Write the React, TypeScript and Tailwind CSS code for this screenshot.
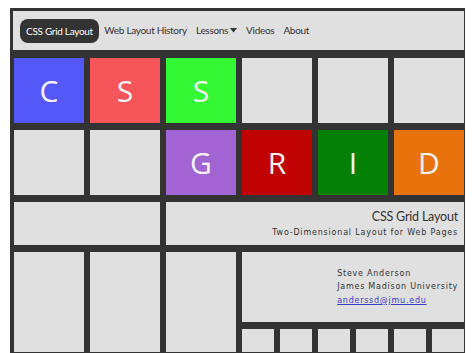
const tiles = [
  { letter: "C", bg: "bg-[#5458f8]" },
  { letter: "S", bg: "bg-[#f6565a]" },
  { letter: "S", bg: "bg-[#35f834]" },
  { letter: "", bg: "bg-[#e0e0e0]" },
  { letter: "", bg: "bg-[#e0e0e0]" },
  { letter: "", bg: "bg-[#e0e0e0]" },
  { letter: "", bg: "bg-[#e0e0e0]" },
  { letter: "", bg: "bg-[#e0e0e0]" },
  { letter: "G", bg: "bg-[#a263d3]" },
  { letter: "R", bg: "bg-[#c00202]" },
  { letter: "I", bg: "bg-[#048004]" },
  { letter: "D", bg: "bg-[#e8730c]" },
];

const navItems = ["Web Layout History", "Lessons", "Videos", "About"];

export default function App() {
  return (
    <div className="min-h-[353px] bg-white pl-[10px] pt-[8px] font-['Open_Sans',sans-serif]">
      <div className="w-[455px] bg-[#333333] pt-[3px] pl-[3px] pr-[1px] pb-4">
        <nav className="flex h-[39px] items-center bg-[#e0e0e0] pl-[7px] font-['Lato',sans-serif] text-[10px] tracking-[-0.3px] text-[#333]">
          <span className="mr-[1px] rounded-[8px] bg-[#333333] px-[6px] py-[5px] leading-[14px] text-white">
            CSS Grid Layout
          </span>
          {navItems.map((item) => (
            <span key={item} className="flex items-center px-[4.5px]">
              {item}
              {item === "Lessons" && (
                <svg width="7" height="5" viewBox="0 0 7 5" className="ml-[2px]">
                  <path d="M0 0h7L3.5 4.5z" fill="#333" />
                </svg>
              )}
            </span>
          ))}
        </nav>
        <div className="mt-[8px] ml-px grid grid-cols-[repeat(12,32px)] grid-rows-[65px_65px_43px_70px_23px] gap-x-[6px] gap-y-[7px]">
          {tiles.map((t, i) => (
            <div
              key={i}
              className={`col-span-2 flex items-center justify-center text-[30px] text-[#f4f4f4] ${t.bg}`}
            >
              {t.letter}
            </div>
          ))}
          <div className="col-span-4 bg-[#e0e0e0]" />
          <div className="col-span-8 flex flex-col items-end justify-center bg-[#e0e0e0] pr-[6px] text-[#333]">
            <div className="font-['Lato',sans-serif] text-[12.5px] leading-[17px] tracking-[-0.2px]">CSS Grid Layout</div>
            <div className="mt-[2px] font-['DejaVu_Sans',sans-serif] text-[8px] tracking-[0.8px]">
              Two-Dimensional Layout for Web Pages
            </div>
          </div>
          <div className="col-span-2 row-span-2 bg-[#e0e0e0]" />
          <div className="col-span-2 row-span-2 bg-[#e0e0e0]" />
          <div className="col-span-2 row-span-2 bg-[#e0e0e0]" />
          <div className="col-span-6 flex items-center justify-end bg-[#e0e0e0] pr-[6px]">
            <div className="font-['DejaVu_Sans',sans-serif] text-[8px] leading-[13.5px] tracking-[0.75px] text-[#333]">
              <div>Steve Anderson</div>
              <div>James Madison University</div>
              <a href="#" className="text-[#3a3acc] underline">
                anderssd@jmu.edu
              </a>
            </div>
          </div>
          {[0, 1, 2, 3, 4, 5].map((i) => (
            <div key={i} className="bg-[#e0e0e0]" />
          ))}
        </div>
      </div>
    </div>
  );
}
